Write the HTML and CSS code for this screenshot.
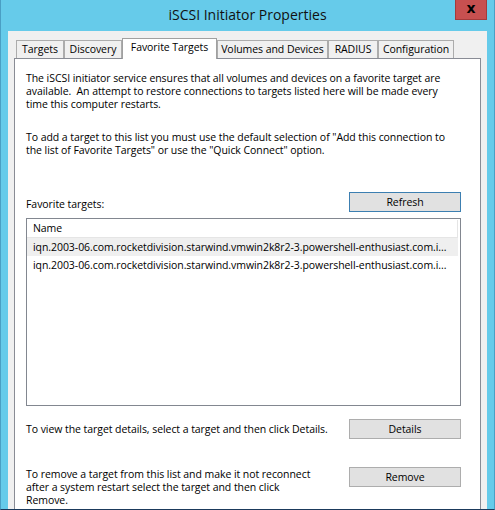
FILE: index.html
```html
<html>
    <head>
        <title>iSCSI Initiator Properties</title>
        <link rel="stylesheet" href="styles.css">
    </head>
    <body>
        <div class="window">
            <div class="titlebar">
                <span></span>
                <span class="title">iSCSI Initiator Properties</span>
                <span class="close">x</span>
            </div>
            <div class="client">
                <div class="tabs">
                    <span class="tab t-targets">Targets</span>
                    <span class="tab t-discovery">Discovery</span>
                    <span class="tab active t-favorite">Favorite Targets</span>
                    <span class="tab t-volumes">Volumes and Devices</span>
                    <span class="tab t-radius">RADIUS</span>
                    <span class="tab t-config">Configuration</span>
                </div>
                <div class="panel">
                    <p class="intro">The iSCSI initiator service ensures that all volumes and devices on a favorite target are<br>available.&nbsp; An attempt to restore connections to targets listed here will be made every<br>time this computer restarts.</p>
                    <p class="intro second">To add a target to this list you must use the default selection of "Add this connection to<br>the list of Favorite Targets" or use the "Quick Connect" option.</p>

                    <div class="row refresh-row">
                        <label>Favorite targets:</label>
                        <button class="default">Refresh</button>
                    </div>

                    <div class="list">
                        <div class="list-head"><span>Name</span></div>
                        <div class="list-row hover">iqn.2003-06.com.rocketdivision.starwind.vmwin2k8r2-3.powershell-enthusiast.com.i...</div>
                        <div class="list-row">iqn.2003-06.com.rocketdivision.starwind.vmwin2k8r2-3.powershell-enthusiast.com.i...</div>
                    </div>

                    <div class="row details-row">
                        <p>To view the target details, select a target and then click Details.</p>
                        <button>Details</button>
                    </div>

                    <div class="row remove-row">
                        <p>To remove a target from this list and make it not reconnect<br>after a system restart select the target and then click<br>Remove.</p>
                        <button>Remove</button>
                    </div>
                </div>
            </div>
        </div>
    </body>
</html>
```

FILE: styles.css
```css
body {
    margin: 0;
    width: 495px;
    height: 510px;
    overflow: hidden;
    font-family: "Open Sans", "Liberation Sans", sans-serif;
    font-size: 10.5px;
    letter-spacing: -0.06px;
    color: #000;
}
.window {
    box-sizing: border-box;
    height: 510px;
    display: flex;
    flex-direction: column;
    background: #66cbea;
    border-left: 1px solid #4a9fc4;
    border-right: 1px solid #4a9fc4;
    border-bottom: 1px solid #1b3a5c;
}
.titlebar {
    height: 31px;
    flex: none;
    display: grid;
    grid-template-columns: 1fr auto 1fr;
}
.title {
    font-size: 14px;
    letter-spacing: 0;
    line-height: 30px;
    color: #111;
}
.close {
    justify-self: end;
    align-self: start;
    box-sizing: border-box;
    width: 32px;
    height: 20px;
    margin-right: 7px;
    background: #c75050;
    border: 1px solid #a43b3b;
    border-top: none;
    color: #000;
    font-weight: bold;
    font-size: 14px;
    line-height: 16px;
    text-align: center;
    font-family: "DejaVu Sans", sans-serif;
}
.client {
    flex: 1;
    min-height: 0;
    margin: 0 7px 0 7px;
    padding: 7px 6px 0 6px;
    background: #f0f0f0;
    display: flex;
    flex-direction: column;
}
.tabs {
    display: flex;
    flex: none;
    height: 20px;
    padding-left: 2px;
    position: relative;
    z-index: 1;
}
.tab {
    box-sizing: border-box;
    height: 18px;
    margin-top: 2px;
    border: 1px solid #acacac;
    border-bottom: none;
    background: #f0f0f0;
    text-align: center;
    line-height: 17px;
    white-space: nowrap;
}
.tab.active {
    height: 21px;
    margin-top: 0;
    background: #fff;
    line-height: 16px;
    border-color: #a0a0a0;
}
.t-targets { width: 48px; }
.t-discovery { width: 58px; }
.t-favorite { width: 95px; }
.t-volumes { width: 111px; }
.t-radius { width: 50px; }
.t-config { width: 76px; }
.panel {
    flex: 1;
    min-height: 0;
    background: #fff;
    border: 1px solid #898c95;
    border-bottom: none;
    padding: 13px 19px 0 11px;
    display: flex;
    flex-direction: column;
}
p {
    margin: 0;
    line-height: 13px;
    white-space: nowrap;
}
.second {
    margin-top: 20px;
}
.row {
    display: flex;
    flex: none;
    justify-content: space-between;
}
button {
    box-sizing: border-box;
    width: 112px;
    height: 20px;
    flex: none;
    background: #e1e1e1;
    border: 1px solid #adadad;
    font: inherit;
    letter-spacing: inherit;
    padding: 0;
}
button.default {
    border-color: #3c7fb1;
}
.refresh-row {
    margin-top: 35px;
    align-items: flex-end;
}
.refresh-row label {
    line-height: 13px;
    margin-bottom: 1px;
}
.list {
    box-sizing: border-box;
    flex: none;
    height: 188px;
    margin-top: 6px;
    border: 1px solid #828790;
    padding-top: 1px;
}
.list-head {
    height: 17px;
    line-height: 17px;
    margin-right: 2px;
    padding-left: 6px;
    border-right: 1px solid #e5e5e5;
    border-bottom: 1px solid #e5e5e5;
}
.list-row {
    height: 18px;
    line-height: 18px;
    padding-left: 6px;
    margin-right: 2px;
    white-space: nowrap;
    overflow: hidden;
}
.list-row.hover {
    background: #efefef;
}
.details-row {
    margin-top: 13px;
    align-items: center;
}
.remove-row {
    margin-top: 28px;
    align-items: flex-start;
}
.remove-row p {
    margin-top: 1px;
}
```
